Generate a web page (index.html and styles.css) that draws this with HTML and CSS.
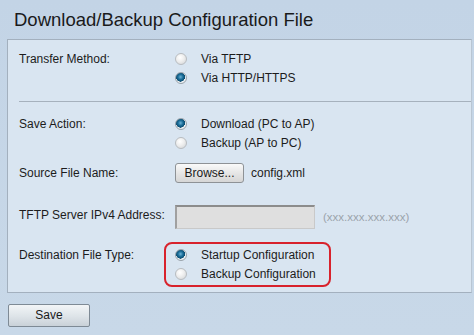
FILE: index.html
```html
<!DOCTYPE html>
<html>
<head>
<meta charset="utf-8">
<link rel="stylesheet" href="styles.css">
</head>
<body>
<div class="page">
  <h1 class="title">Download/Backup Configuration File</h1>
  <div class="panel">
    <div class="section sec1">
      <div class="field">
        <div class="label">Transfer Method:</div>
        <div class="options">
          <div class="opt"><span class="radio"></span><span>Via TFTP</span></div>
          <div class="opt"><span class="radio on"></span><span>Via HTTP/HTTPS</span></div>
        </div>
      </div>
    </div>
    <div class="sep"></div>
    <div class="section sec2">
      <div class="field">
        <div class="label">Save Action:</div>
        <div class="options">
          <div class="opt"><span class="radio on"></span><span>Download (PC to AP)</span></div>
          <div class="opt"><span class="radio"></span><span>Backup (AP to PC)</span></div>
        </div>
      </div>
      <div class="field row-file">
        <div class="label">Source File Name:</div>
        <div class="value">
          <span class="browse">Browse...</span><span class="filename">config.xml</span>
        </div>
      </div>
      <div class="field row-ip">
        <div class="label">TFTP Server IPv4 Address:</div>
        <div class="value">
          <span class="ipbox"></span><span class="hint">(xxx.xxx.xxx.xxx)</span>
        </div>
      </div>
      <div class="field row-dest">
        <div class="label">Destination File Type:</div>
        <div class="options marked">
          <div class="opt"><span class="radio on"></span><span>Startup Configuration</span></div>
          <div class="opt"><span class="radio"></span><span>Backup Configuration</span></div>
        </div>
      </div>
    </div>
  </div>
  <div class="actions">
    <span class="save">Save</span>
  </div>
</div>
</body>
</html>
```

FILE: styles.css
```css
html, body {
  margin: 0;
  padding: 0;
}
body {
  background: linear-gradient(#c3d4e6, #c8d8e8);
  font-family: "Liberation Sans", Arial, sans-serif;
  color: #1c1c1c;
  width: 474px;
  height: 335px;
  overflow: hidden;
}
.page {
  display: flex;
  flex-direction: column;
}
.title {
  margin: 0;
  height: 39px;
  line-height: 39px;
  padding-left: 14px;
  font-size: 18.5px;
  font-weight: normal;
  color: #1a1a1a;
  white-space: nowrap;
}
.panel {
  margin-left: 7px;
  width: 465px;
  background: #d9e5f1;
  border: 1px solid #a3b0be;
  border-right-color: #b9c6d3;
  box-sizing: border-box;
  height: 254px;
}
.section {
  padding-left: 11px;
}
.sec1 {
  padding-top: 10px;
}
.sep {
  margin: 14px 0 0 11px;
  height: 1px;
  background: #a6b1bd;
}
.sec2 {
  padding-top: 13px;
}
.field {
  display: grid;
  grid-template-columns: 156px 1fr;
  font-size: 12px;
  line-height: 18px;
}
.label {
  white-space: nowrap;
  align-self: start;
}
.options {
  display: flex;
  flex-direction: column;
}
.opt {
  display: flex;
  align-items: center;
  height: 18px;
  gap: 14px;
}
.opt + .opt {
  margin-top: 1px;
}
.radio {
  width: 12px;
  height: 12px;
  border-radius: 50%;
  box-sizing: border-box;
  border: 1px solid #b8bcc0;
  background: radial-gradient(circle at 40% 35%, #ffffff 0%, #eeeeee 45%, #cfd2d5 100%);
  flex: none;
}
.radio.on {
  border: 1px solid #9aa3ab;
  background: radial-gradient(circle at 45% 40%, #6fb3d6 0%, #1c6f9a 30%, #0b4a6e 55%, #eef2f4 58%, #dfe4e8 100%);
}
.row-file {
  margin-top: 11px;
}
.row-file .label,
.row-ip .label {
  align-self: center;
}
.value {
  display: flex;
  align-items: center;
}
.browse {
  display: inline-block;
  box-sizing: border-box;
  width: 69px;
  height: 20px;
  line-height: 18px;
  text-align: center;
  border: 1px solid #8e9296;
  border-radius: 3px;
  background: linear-gradient(#fafafa, #e4e4e4 55%, #d6d6d6);
  font-size: 12px;
  color: #1a1a1a;
}
.filename {
  margin-left: 7px;
}
.row-ip {
  margin-top: 22px;
}
.row-ip .label {
  margin-top: -5px;
}
.ipbox {
  display: inline-block;
  box-sizing: border-box;
  width: 140px;
  height: 24px;
  background: #dfdfdf;
  border: 1px solid #c9c9c9;
  border-top: 2px solid #8c8c8c;
  border-left: 2px solid #a0a0a0;
}
.hint {
  margin-left: 8px;
  color: #9ba3ab;
  font-size: 11.5px;
}
.row-dest {
  margin-top: 17px;
}
.marked {
  position: relative;
}
.marked::after {
  content: "";
  position: absolute;
  left: -11px;
  top: -4px;
  width: 167px;
  height: 45px;
  box-sizing: border-box;
  border: 2px solid #d8222c;
  border-radius: 8px;
}
.actions {
  padding: 11px 0 0 8px;
}
.save {
  display: inline-block;
  box-sizing: border-box;
  width: 82px;
  height: 23px;
  line-height: 21px;
  text-align: center;
  font-size: 12px;
  border: 1px solid #7e8a95;
  border-radius: 2px;
  background: linear-gradient(#f2f5f7, #dde3e8 55%, #c9d1d8);
  color: #1a1a1a;
}
```
